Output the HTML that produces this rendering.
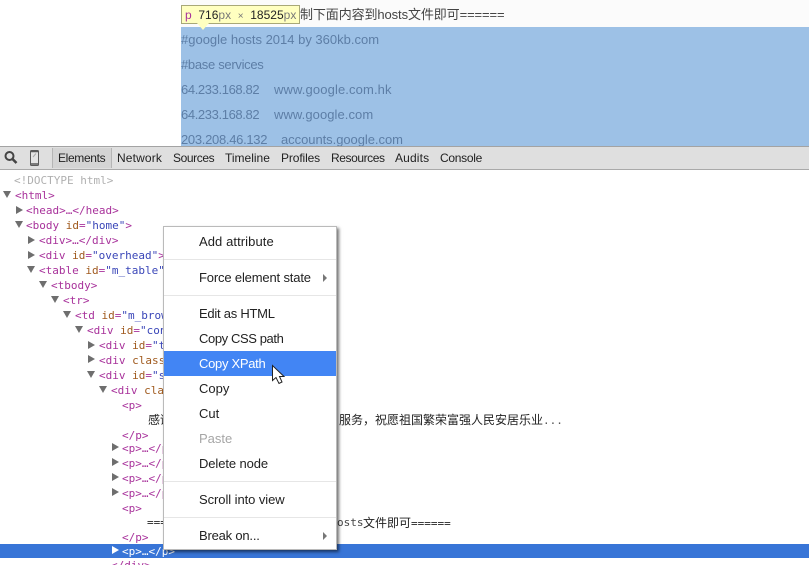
<!DOCTYPE html>
<html><head><meta charset="utf-8"><style>
html,body{margin:0;padding:0;background:#fff}
#r{position:relative;width:809px;height:565px;overflow:hidden;background:#fff}
#r div{position:absolute}
.t{font:13px/20px "Liberation Sans","Noto Sans CJK SC",sans-serif;color:#5d7ea6;white-space:pre;left:181px}
.l{font:11px/15px "DejaVu Sans Mono","Liberation Mono","WenQuanYi Zen Hei",monospace;white-space:pre;color:#a8329b;height:15px}
.l b{font-weight:normal;color:#a05a1e}.l i{font-style:normal;color:#3a46b8}
.c{font:12px/15px "WenQuanYi Zen Hei","Noto Sans CJK SC",sans-serif}
.a{width:0;height:0;border-style:solid}
.tab{font:12px/16px "Liberation Sans",sans-serif;color:#222;top:150px;white-space:pre}
.m{font:13px/18px "Liberation Sans",sans-serif;color:#222;left:199px;white-space:pre}
.s{left:164px;width:172px;height:1px;background:#e6e6e6}
</style></head><body><div id="r">
<div style="left:0;top:0;width:181px;height:147px;background:#fff"></div>
<div style="left:181px;top:0;width:628px;height:27px;background:#fbfbfb"></div>
<div style="left:181px;top:27px;width:628px;height:120px;background:#9dc1e6"></div>
<div style="left:300px;top:5px;font:13px/20px 'Liberation Sans','Noto Sans CJK SC',sans-serif;color:#444;white-space:pre;letter-spacing:-.1px">制下面内容到hosts文件即可======</div>
<div class="t" style="top:30px">#google hosts 2014 by 360kb.com</div>
<div class="t" style="top:55px;letter-spacing:-.3px">#base services</div>
<div class="t" style="top:80px;letter-spacing:-.38px">64.233.168.82</div>
<div class="t" style="top:80px;left:274px;letter-spacing:.12px">www.google.com.hk</div>
<div class="t" style="top:105px;letter-spacing:-.38px">64.233.168.82</div>
<div class="t" style="top:105px;left:274px;letter-spacing:.07px">www.google.com</div>
<div class="t" style="top:130px;letter-spacing:-.3px">203.208.46.132</div>
<div class="t" style="top:130px;left:281px;letter-spacing:-.05px">accounts.google.com</div>
<div style="left:181px;top:5px;width:117px;height:17px;background:#ffffc0;border:1px solid #a8a878;font:12px/18px 'Liberation Sans',sans-serif;color:#222;white-space:pre;box-sizing:content-box"><span style="color:#a8329b;margin-left:3px">p</span>  716<span style="color:#777">px</span>  <span style="color:#777;font-size:10px">×</span>  18525<span style="color:#777">px</span></div>
<div class="a" style="left:197px;top:23px;border-width:7px 6px 0 6px;border-color:#ffffc0 transparent transparent transparent"></div>

<div style="left:0;top:146px;width:809px;height:1px;background:#a3a3a3"></div>
<div style="left:0;top:147px;width:809px;height:22px;background:#dfdfdf"></div>
<div style="left:0;top:169px;width:809px;height:1px;background:#a9a9a9"></div>
<svg style="position:absolute;left:0;top:147px" width="52" height="22"><circle cx="9.5" cy="9" r="4" fill="none" stroke="#444" stroke-width="2"/><path d="M12.5 12L16.5 16" stroke="#444" stroke-width="2.6"/><rect x="30.5" y="3.5" width="8" height="15" rx="1" fill="#e4e4e4" stroke="#5a5a5a"/><path d="M30.5 4.5H38.5M30.5 17H38.5" stroke="#5a5a5a" stroke-width="1.6"/><path d="M33 10L36 6.5" stroke="#aaa"/></svg>
<div style="left:52px;top:148px;width:58px;height:20px;background:#d4d4d4;border-left:1px solid #b5b5b5;border-right:1px solid #b5b5b5"></div>
<div class="tab" style="left:58px;letter-spacing:-.35px">Elements</div>
<div class="tab" style="left:117px;letter-spacing:.14px">Network</div>
<div class="tab" style="left:173px;letter-spacing:-.4px">Sources</div>
<div class="tab" style="left:225px">Timeline</div>
<div class="tab" style="left:281px;letter-spacing:-.12px">Profiles</div>
<div class="tab" style="left:331px;letter-spacing:-.42px">Resources</div>
<div class="tab" style="left:395px;letter-spacing:.15px">Audits</div>
<div class="tab" style="left:440px;letter-spacing:-.28px">Console</div>

<div style="left:0;top:544px;width:809px;height:14px;background:#3875d7"></div>

<div class="l" style="left:14px;top:173px;color:#b0b0b0">&lt;!DOCTYPE html&gt;</div>
<div class="l" style="left:15px;top:188px">&lt;html&gt;</div>
<div class="l" style="left:26px;top:203px">&lt;head&gt;…&lt;/head&gt;</div>
<div class="l" style="left:26px;top:218px">&lt;body <b>id</b>=<i>"home"</i>&gt;</div>
<div class="l" style="left:39px;top:233px">&lt;div&gt;…&lt;/div&gt;</div>
<div class="l" style="left:39px;top:248px">&lt;div <b>id</b>=<i>"overhead"</i>&gt;</div>
<div class="l" style="left:39px;top:263px">&lt;table <b>id</b>=<i>"m_table"</i></div>
<div class="l" style="left:51px;top:278px">&lt;tbody&gt;</div>
<div class="l" style="left:63px;top:293px">&lt;tr&gt;</div>
<div class="l" style="left:75px;top:308px">&lt;td <b>id</b>=<i>"m_brow</i></div>
<div class="l" style="left:87px;top:323px">&lt;div <b>id</b>=<i>"con</i></div>
<div class="l" style="left:99px;top:338px">&lt;div <b>id</b>=<i>"t</i></div>
<div class="l" style="left:99px;top:353px">&lt;div <b>class</b></div>
<div class="l" style="left:99px;top:368px">&lt;div <b>id</b>=<i>"s</i></div>
<div class="l" style="left:111px;top:383px">&lt;div <b>cla</b></div>
<div class="l" style="left:122px;top:398px">&lt;p&gt;</div>
<div class="l c" style="left:148px;top:412px;color:#222">感谢</div>
<div class="l c" style="left:339px;top:412px;color:#222">服务，祝愿祖国繁荣富强人民安居乐业<span style="font:11px/15px 'DejaVu Sans Mono',monospace;color:#555">...</span></div>
<div class="l" style="left:122px;top:428px">&lt;/p&gt;</div>
<div class="l" style="left:122px;top:441px">&lt;p&gt;…&lt;/p&gt;</div>
<div class="l" style="left:122px;top:456px">&lt;p&gt;…&lt;/p&gt;</div>
<div class="l" style="left:122px;top:471px">&lt;p&gt;…&lt;/p&gt;</div>
<div class="l" style="left:122px;top:486px">&lt;p&gt;…&lt;/p&gt;</div>
<div class="l" style="left:122px;top:501px">&lt;p&gt;</div>
<div class="l" style="left:147px;top:515px;color:#222">======</div>
<div class="l" style="left:337px;top:515px;color:#444">osts</div>
<div class="l c" style="left:363px;top:515px;color:#222">文件即可<span style="font:11px/15px 'DejaVu Sans Mono',monospace">======</span></div>
<div class="l" style="left:122px;top:530px">&lt;/p&gt;</div>
<div class="l" style="left:122px;top:544px;color:#fff">&lt;p&gt;…&lt;/p&gt;</div>
<div class="l" style="left:111px;top:558px">&lt;/div&gt;</div>

<div class="a" style="left:3px;top:191px;border-width:7px 4px 0 4px;border-color:#6e6e6e transparent transparent transparent"></div>
<div class="a" style="left:16px;top:206px;border-width:4px 0 4px 7px;border-color:transparent transparent transparent #6e6e6e"></div>
<div class="a" style="left:15px;top:221px;border-width:7px 4px 0 4px;border-color:#6e6e6e transparent transparent transparent"></div>
<div class="a" style="left:28px;top:236px;border-width:4px 0 4px 7px;border-color:transparent transparent transparent #6e6e6e"></div>
<div class="a" style="left:28px;top:251px;border-width:4px 0 4px 7px;border-color:transparent transparent transparent #6e6e6e"></div>
<div class="a" style="left:27px;top:266px;border-width:7px 4px 0 4px;border-color:#6e6e6e transparent transparent transparent"></div>
<div class="a" style="left:39px;top:281px;border-width:7px 4px 0 4px;border-color:#6e6e6e transparent transparent transparent"></div>
<div class="a" style="left:51px;top:296px;border-width:7px 4px 0 4px;border-color:#6e6e6e transparent transparent transparent"></div>
<div class="a" style="left:63px;top:311px;border-width:7px 4px 0 4px;border-color:#6e6e6e transparent transparent transparent"></div>
<div class="a" style="left:75px;top:326px;border-width:7px 4px 0 4px;border-color:#6e6e6e transparent transparent transparent"></div>
<div class="a" style="left:88px;top:341px;border-width:4px 0 4px 7px;border-color:transparent transparent transparent #6e6e6e"></div>
<div class="a" style="left:88px;top:355px;border-width:4px 0 4px 7px;border-color:transparent transparent transparent #6e6e6e"></div>
<div class="a" style="left:87px;top:371px;border-width:7px 4px 0 4px;border-color:#6e6e6e transparent transparent transparent"></div>
<div class="a" style="left:99px;top:386px;border-width:7px 4px 0 4px;border-color:#6e6e6e transparent transparent transparent"></div>
<div class="a" style="left:112px;top:443px;border-width:4px 0 4px 7px;border-color:transparent transparent transparent #6e6e6e"></div>
<div class="a" style="left:112px;top:458px;border-width:4px 0 4px 7px;border-color:transparent transparent transparent #6e6e6e"></div>
<div class="a" style="left:112px;top:473px;border-width:4px 0 4px 7px;border-color:transparent transparent transparent #6e6e6e"></div>
<div class="a" style="left:112px;top:488px;border-width:4px 0 4px 7px;border-color:transparent transparent transparent #6e6e6e"></div>
<div class="a" style="left:112px;top:546px;border-width:4px 0 4px 7px;border-color:transparent transparent transparent #fff"></div>

<div style="left:163px;top:226px;width:172px;height:322px;background:#fff;border:1px solid #bababa;box-shadow:2px 2px 3px rgba(0,0,0,.55)"></div>
<div class="m" style="top:233px;letter-spacing:.08px">Add attribute</div>
<div class="s" style="top:259px"></div>
<div class="m" style="top:269px;letter-spacing:-.16px">Force element state</div>
<div class="a" style="left:323px;top:274px;border-width:4px 0 4px 4px;border-color:transparent transparent transparent #777"></div>
<div class="s" style="top:295px"></div>
<div class="m" style="top:305px;letter-spacing:-.25px">Edit as HTML</div>
<div class="m" style="top:330px;letter-spacing:-.4px">Copy CSS path</div>
<div style="left:164px;top:351px;width:172px;height:25px;background:#4285f4"></div>
<div class="m" style="top:355px;color:#fff;letter-spacing:-.3px">Copy XPath</div>
<div class="m" style="top:380px">Copy</div>
<div class="m" style="top:405px">Cut</div>
<div class="m" style="top:430px;color:#a6a6a6">Paste</div>
<div class="m" style="top:455px;letter-spacing:-.1px">Delete node</div>
<div class="s" style="top:481px"></div>
<div class="m" style="top:491px;letter-spacing:-.07px">Scroll into view</div>
<div class="s" style="top:517px"></div>
<div class="m" style="top:527px;letter-spacing:-.2px">Break on...</div>
<div class="a" style="left:323px;top:532px;border-width:4px 0 4px 4px;border-color:transparent transparent transparent #777"></div>
<svg style="position:absolute;left:271px;top:364px" width="18" height="22"><path d="M1.5 1.5V16.5L5 13.5L8 19.5L11 18L8.5 12.5H13Z" fill="#fff" stroke="#222" stroke-width="1"/></svg>
</div></body></html>
